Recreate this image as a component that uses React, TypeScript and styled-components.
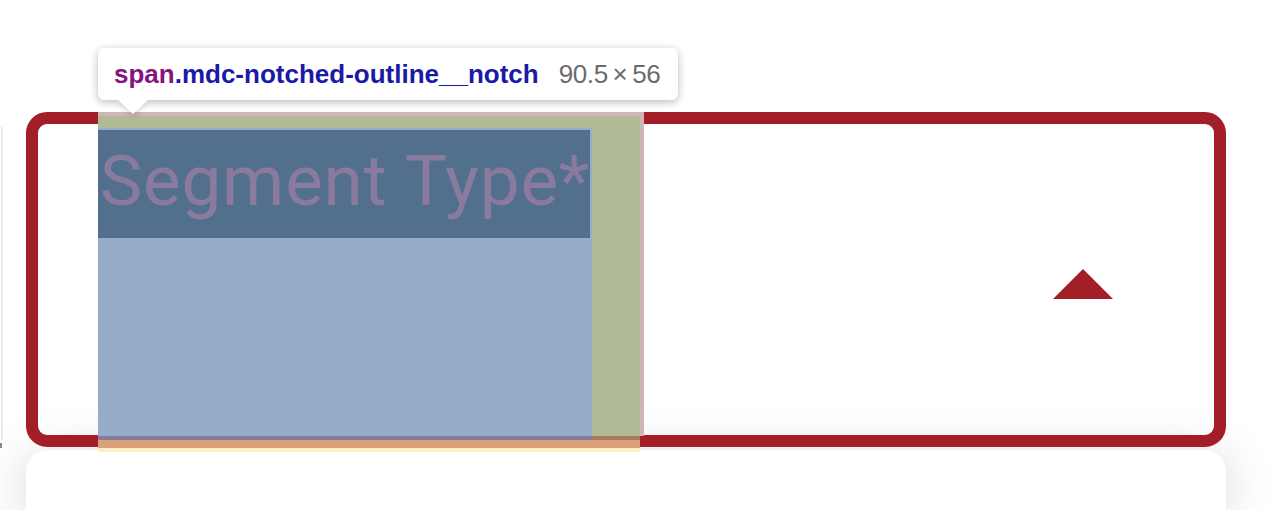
import React from "react"
import styled, { createGlobalStyle } from "styled-components"

const red = "#a31f28"

const GlobalStyle = createGlobalStyle`
  html, body {
    margin: 0;
    padding: 0;
    background: #ffffff;
    overflow: hidden;
  }
  body {
    font-family: Roboto, "Liberation Sans", sans-serif;
  }
`

const Stage = styled.div`
  width: 1288px;
  height: 510px;
  display: flex;
  overflow: hidden;
`

const Gutter = styled.div`
  width: 26px;
  flex-shrink: 0;
  padding-top: 126px;
  display: flex;
  flex-direction: column;
`

const NeighbourEdge = styled.div`
  width: 3px;
  height: 314px;
  border-right: 2px solid #ececec;
  border-top-right-radius: 10px;
  box-sizing: border-box;
`

const NeighbourTick = styled.div`
  width: 2px;
  height: 5px;
  margin-top: 3px;
  background: #8a8a8a;
`

const Column = styled.div`
  width: 1200px;
  padding-top: 112px;
  display: flex;
  flex-direction: column;
  gap: 3px;
`

const Field = styled.div`
  position: relative;
  height: 335px;
  box-sizing: border-box;
  border: 12px solid ${red};
  border-radius: 21px;
  display: flex;
  align-items: center;
  justify-content: flex-end;
  padding: 8px 101px 0 0;
`

const Arrow = styled.svg`
  width: 60px;
  height: 30px;
  display: block;
`

const Highlight = styled.div`
  position: absolute;
  left: 60px;
  top: -12px;
  width: 546px;
  display: flex;
  flex-direction: column;
  z-index: 1;
`

const MarginTop = styled.div`
  height: 4px;
  background: #cfb5b5;
`

const BoxRow = styled.div`
  display: flex;
  height: 324px;
`

const ContentCol = styled.div`
  width: 494px;
  padding-top: 12px;
  background: #b1bb98;
  display: flex;
  flex-direction: column;
`

const Content = styled.div`
  flex: 1;
  background: #97abca;
  border-bottom: 4px solid #877b9b;
  padding: 2px 2px 0 0;
  display: flex;
  flex-direction: column;
`

const LabelBox = styled.div`
  height: 108px;
  background: #526f8e;
  display: flex;
  align-items: flex-start;
  overflow: visible;
`

const Label = styled.span`
  font-family: Roboto, "Liberation Sans", sans-serif;
  font-size: 71px;
  line-height: 102px;
  color: #8a7b9e;
  padding-left: 2px;
  white-space: nowrap;
  letter-spacing: 0.8px;
`

const PaddingCol = styled.div`
  width: 48px;
  background: #b1bb98;
  border-bottom: 4px solid #a37c5f;
`

const MarginSide = styled.div`
  width: 4px;
  height: 320px;
  background: #cfb5b5;
`

const Band = styled.div<{ $tone: string; $h: number }>`
  width: 542px;
  height: ${(p) => p.$h}px;
  background: ${(p) => p.$tone};
`

const Tooltip = styled.div`
  position: absolute;
  left: 60px;
  top: -76px;
  width: 580px;
  height: 52px;
  box-sizing: border-box;
  padding-left: 16px;
  background: #ffffff;
  border-radius: 6px;
  box-shadow: 0 2px 9px rgba(0, 0, 0, 0.28);
  display: flex;
  align-items: center;
  gap: 20px;
  font-family: "Liberation Sans", Arial, sans-serif;
  font-size: 26px;
  z-index: 2;

  &::after {
    content: "";
    position: absolute;
    left: 20px;
    bottom: -14px;
    border-left: 15px solid transparent;
    border-right: 15px solid transparent;
    border-top: 14px solid #ffffff;
    filter: drop-shadow(0 3px 2px rgba(0, 0, 0, 0.12));
  }
`

const Selector = styled.span`
  font-weight: bold;
  color: #1a1aa6;
  letter-spacing: 0;

  b {
    color: #881280;
  }
`

const Size = styled.span`
  color: #6b6b6b;
  letter-spacing: -0.4px;
`

const Card = styled.div`
  flex: 1;
  background: #ffffff;
  border-radius: 21px 21px 0 0;
  box-shadow: 0 6px 50px rgba(0, 0, 0, 0.17);
`

function App() {
  return (
    <>
      <GlobalStyle />
      <Stage>
        <Gutter>
          <NeighbourEdge />
          <NeighbourTick />
        </Gutter>
        <Column>
          <Field>
            <Tooltip>
              <Selector>
                <b>span</b>.mdc-notched-outline__notch
              </Selector>
              <Size>90.5{"\u2009"}×{"\u2009"}56</Size>
            </Tooltip>
            <Highlight>
              <MarginTop />
              <BoxRow>
                <ContentCol>
                  <Content>
                    <LabelBox>
                      <Label>Segment Type*</Label>
                    </LabelBox>
                  </Content>
                </ContentCol>
                <PaddingCol />
                <MarginSide />
              </BoxRow>
              <Band $tone="#dba078" $h={8} />
              <Band $tone="#fcefc6" $h={4} />
            </Highlight>
            <Arrow viewBox="0 0 60 30">
              <polygon points="0,30 30,0 60,30" fill={red} />
            </Arrow>
          </Field>
          <Card />
        </Column>
      </Stage>
    </>
  )
}

export default App
